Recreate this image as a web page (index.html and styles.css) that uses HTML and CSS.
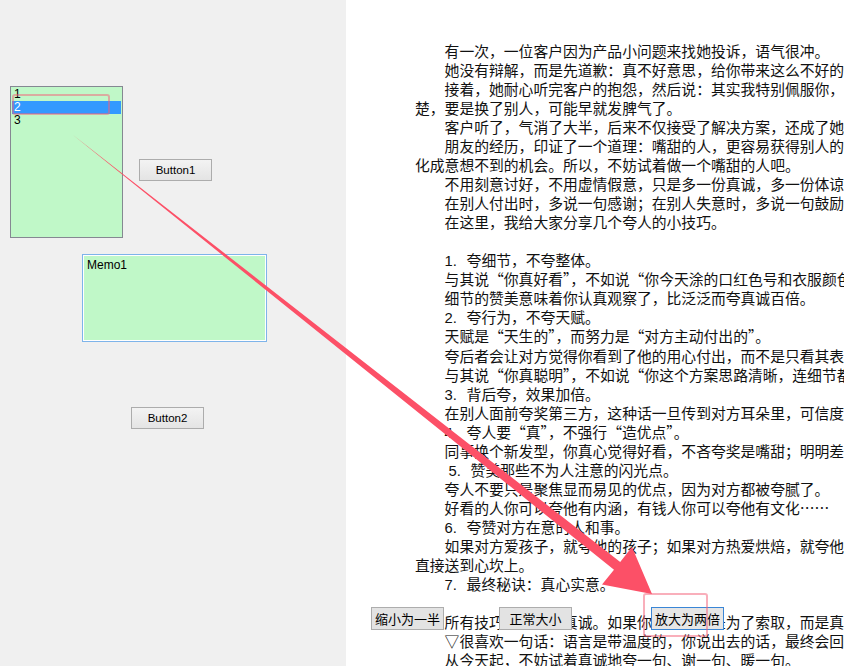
FILE: index.html
```html
<!DOCTYPE html>
<html lang="zh-CN">
<head>
<meta charset="utf-8">
<title>Form1</title>
<link rel="stylesheet" href="styles.css">
</head>
<body>
<div class="screen">
  <div class="form">
    <div class="row1">
      <div class="listbox">
        <div class="item">1</div>
        <div class="item sel">2</div>
        <div class="item">3</div>
      </div>
      <button class="btn btn-classic btn1">Button1</button>
    </div>
    <div class="memo">Memo1</div>
    <button class="btn btn-classic btn2">Button2</button>
  </div>

  <div class="doc">
    <div class="ln i">有一次，一位客户因为产品小问题来找她投诉，语气很冲。</div>
    <div class="ln i">她没有辩解，而是先道歉：真不好意思，给你带来这么不好的体验。</div>
    <div class="ln i">接着，她耐心听完客户的抱怨，然后说：其实我特别佩服你，这么清</div>
    <div class="ln">楚，要是换了别人，可能早就发脾气了。</div>
    <div class="ln i">客户听了，气消了大半，后来不仅接受了解决方案，还成了她的老客户。</div>
    <div class="ln i">朋友的经历，印证了一个道理：嘴甜的人，更容易获得别人的信任，也更容易</div>
    <div class="ln">化成意想不到的机会。所以，不妨试着做一个嘴甜的人吧。</div>
    <div class="ln i">不用刻意讨好，不用虚情假意，只是多一份真诚，多一份体谅。</div>
    <div class="ln i">在别人付出时，多说一句感谢；在别人失意时，多说一句鼓励。</div>
    <div class="ln i">在这里，我给大家分享几个夸人的小技巧。</div>
    <div class="ln">&nbsp;</div>
    <div class="ln i"><span class="num">1.</span>夸细节，不夸整体。</div>
    <div class="ln i">与其说“你真好看”，不如说“你今天涂的口红色号和衣服颜色很搭”。</div>
    <div class="ln i">细节的赞美意味着你认真观察了，比泛泛而夸真诚百倍。</div>
    <div class="ln i"><span class="num">2.</span>夸行为，不夸天赋。</div>
    <div class="ln i">天赋是“天生的”，而努力是“对方主动付出的”。</div>
    <div class="ln i">夸后者会让对方觉得你看到了他的用心付出，而不是只看其表面。</div>
    <div class="ln i">与其说“你真聪明”，不如说“你这个方案思路清晰，连细节都考虑到了”。</div>
    <div class="ln i"><span class="num">3.</span>背后夸，效果加倍。</div>
    <div class="ln i">在别人面前夸奖第三方，这种话一旦传到对方耳朵里，可信度更高。</div>
    <div class="ln i"><span class="num">4.</span>夸人要“真”，不强行“造优点”。</div>
    <div class="ln i">同事换个新发型，你真心觉得好看，不吝夸奖是嘴甜；明明差强人意</div>
    <div class="ln i"><span class="num num-off">5.</span>赞美那些不为人注意的闪光点。</div>
    <div class="ln i">夸人不要只是聚焦显而易见的优点，因为对方都被夸腻了。</div>
    <div class="ln i">好看的人你可以夸他有内涵，有钱人你可以夸他有文化……</div>
    <div class="ln i"><span class="num">6.</span>夸赞对方在意的人和事。</div>
    <div class="ln i">如果对方爱孩子，就夸他的孩子；如果对方热爱烘焙，就夸他的手艺，</div>
    <div class="ln">直接送到心坎上。</div>
    <div class="ln i"><span class="num">7.</span>最终秘诀：真心实意。</div>
    <div class="ln">&nbsp;</div>
    <div class="ln i">所有技巧的核心是真诚。如果你夸别人不是为了索取，而是真心欣赏</div>
    <div class="ln i">▽很喜欢一句话：语言是带温度的，你说出去的话，最终会回到自己身上。</div>
    <div class="ln i">从今天起，不妨试着真诚地夸一句、谢一句、暖一句。</div>
  </div>

  <div class="zoombar">
    <button class="btn btn-flat zb-half">缩小为一半</button>
    <button class="btn btn-flat zb-normal">正常大小</button>
    <button class="btn btn-flat btn-focus zb-double">放大为两倍</button>
  </div>

  <div class="mark mark-item"></div>
  <div class="mark mark-btn"></div>

  <svg class="arrow" width="844" height="666" viewBox="0 0 844 666" aria-hidden="true">
    <polygon points="73,135 620.2,562 632,547 652,594 602,584.5 614,569.8" fill="#fc5067"/>
  </svg>
</div>
</body>
</html>
```

FILE: styles.css
```css
html, body {
  margin: 0;
  padding: 0;
  background: #ffffff;
}

.screen {
  position: relative;
  display: flex;
  width: 844px;
  height: 666px;
  overflow: hidden;
}

/* ---------- left: the form canvas ---------- */
.form {
  flex: 0 0 346px;
  height: 666px;
  background: #f0f0f0;
  font-family: "Liberation Sans", Arial, sans-serif;
  font-size: 11px;
  color: #000;
}

.row1 {
  display: flex;
  align-items: flex-start;
  padding: 86px 0 0 10px;
}

.listbox {
  box-sizing: border-box;
  width: 113px;
  height: 152px;
  border: 1px solid #858892;
  background: #c0f8c8;
  padding: 1px;
}

.item {
  height: 13px;
  line-height: 13px;
  padding-left: 2px;
  font-size: 12px;
}

.item.sel {
  background: #3399ff;
  color: #ffffff;
}

.btn {
  box-sizing: border-box;
  margin: 0;
  padding: 0;
  color: #000;
  cursor: default;
}

.btn-classic {
  width: 73px;
  height: 22px;
  border: 1px solid #acacac;
  border-radius: 0;
  background: linear-gradient(#f3f3f3, #e4e4e4);
  font-family: "Liberation Sans", Arial, sans-serif;
  font-size: 11.5px;
}

.btn1 {
  margin-left: 16px;
  margin-top: 73px;
}

.memo {
  box-sizing: border-box;
  width: 185px;
  height: 88px;
  margin: 16px 0 0 82px;
  border: 1px solid #7eb4ea;
  box-shadow: inset 0 0 0 1px #ffffff;
  background: #c0f8c8;
  padding: 3px 4px;
  font-size: 12px;
  line-height: 14px;
}

.btn2 {
  display: block;
  margin-left: 131px;
  margin-top: 65px;
}

/* ---------- right: the document ---------- */
.doc {
  flex: 1 1 auto;
  min-width: 0;
  background: #ffffff;
  padding: 41px 0 0 69px;
  overflow: hidden;
  font-family: "Noto Sans CJK SC", sans-serif;
  font-size: 14.8px;
  line-height: 19.04px;
  color: #111;
  white-space: nowrap;
  font-variant-east-asian: full-width;
}

.ln {
  height: 19.04px;
}

.ln.i {
  padding-left: 2em;
}

.num {
  display: inline-block;
  width: 22px;
  line-height: 10px;
  font-family: "Liberation Sans", Arial, sans-serif;
  font-variant-east-asian: normal;
}

.num-off {
  padding-left: 4px;
}

/* ---------- overlays ---------- */
.zoombar {
  position: absolute;
  left: 371px;
  top: 607px;
  display: flex;
}

.btn-flat {
  width: 73px;
  height: 23px;
  border: 1px solid #adadad;
  border-radius: 0;
  background: #e3e3e3;
  font-family: "Noto Sans CJK SC", sans-serif;
  font-size: 13px;
  line-height: 19px;
}

.zb-normal {
  margin-left: 55px;
}

.zb-double {
  margin-left: 79px;
}

.btn-focus {
  border-color: #3a86d6;
  background: #e6e6e6;
}

.mark {
  position: absolute;
  box-sizing: border-box;
  border: 2px solid rgba(243, 96, 120, 0.5);
  border-radius: 3px;
}

.mark-item {
  left: 12px;
  top: 94px;
  width: 98px;
  height: 21px;
}

.mark-btn {
  left: 643px;
  top: 593px;
  width: 65px;
  height: 44px;
}

.arrow {
  position: absolute;
  left: 0;
  top: 0;
  pointer-events: none;
}
```
